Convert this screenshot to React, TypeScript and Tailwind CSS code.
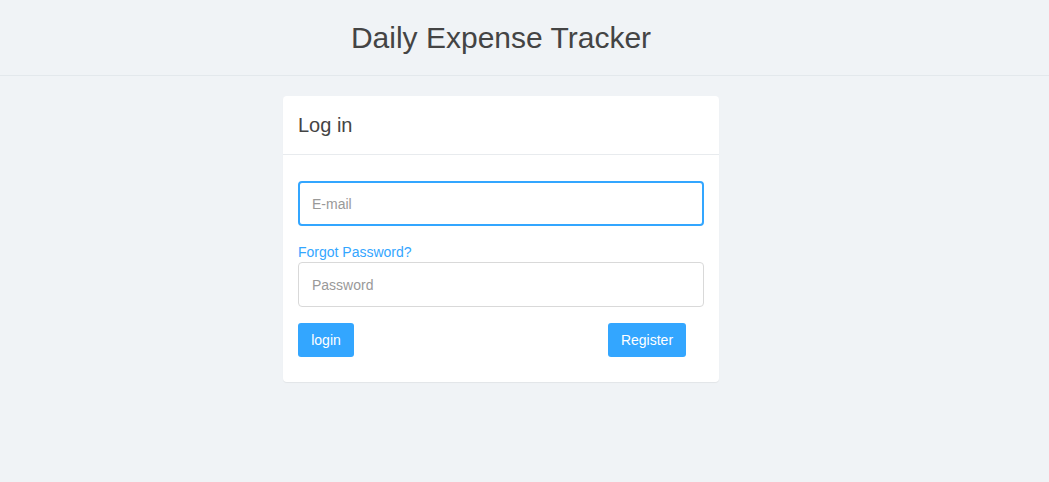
export default function App() {
  return (
    <div className="min-h-[482px] bg-[#f0f3f6] font-['Liberation_Sans',Arial,sans-serif] text-[#444]">
      {/* Header */}
      <header className="h-[76px] border-b border-[#e3e8ec]">
        <div className="flex h-[75px] w-[1002px] items-center justify-center">
          <h1 className="text-[30px] font-normal text-[#444]">Daily Expense Tracker</h1>
        </div>
      </header>

      {/* Card */}
      <div className="w-[1002px] pt-[20px]">
        <div className="mx-auto w-[436px] rounded-[4px] bg-white shadow-[0_1px_1px_rgba(0,0,0,0.06)]">
          <div className="flex h-[59px] items-center border-b border-[#e8ebee] px-[15px]">
            <h2 className="text-[20px] font-normal text-[#444]">Log in</h2>
          </div>
          <div className="px-[15px] pt-[26px] pb-[25px]">
            <input
              type="text"
              placeholder="E-mail"
              autoFocus
              className="block h-[45px] w-full rounded-[4px] border-2 border-[#33a6ff] px-[12px] text-[14px] text-[#444] placeholder-[#999] outline-none"
            />
            <a href="#" className="mt-[17px] block text-[14px] leading-[19px] text-[#33a6ff]">
              Forgot Password?
            </a>
            <input
              type="password"
              placeholder="Password"
              className="block h-[45px] w-full rounded-[4px] border border-[#d9d9d9] px-[13px] text-[14px] text-[#444] placeholder-[#999] outline-none"
            />
            <div className="mt-[16px] flex justify-between pr-[18px]">
              <button
                type="button"
                className="h-[34px] w-[56px] rounded-[3px] bg-[#33a6ff] text-[14px] text-white"
              >
                login
              </button>
              <button
                type="button"
                className="h-[34px] w-[78px] rounded-[3px] bg-[#33a6ff] text-[14px] text-white"
              >
                Register
              </button>
            </div>
          </div>
        </div>
      </div>
    </div>
  );
}
